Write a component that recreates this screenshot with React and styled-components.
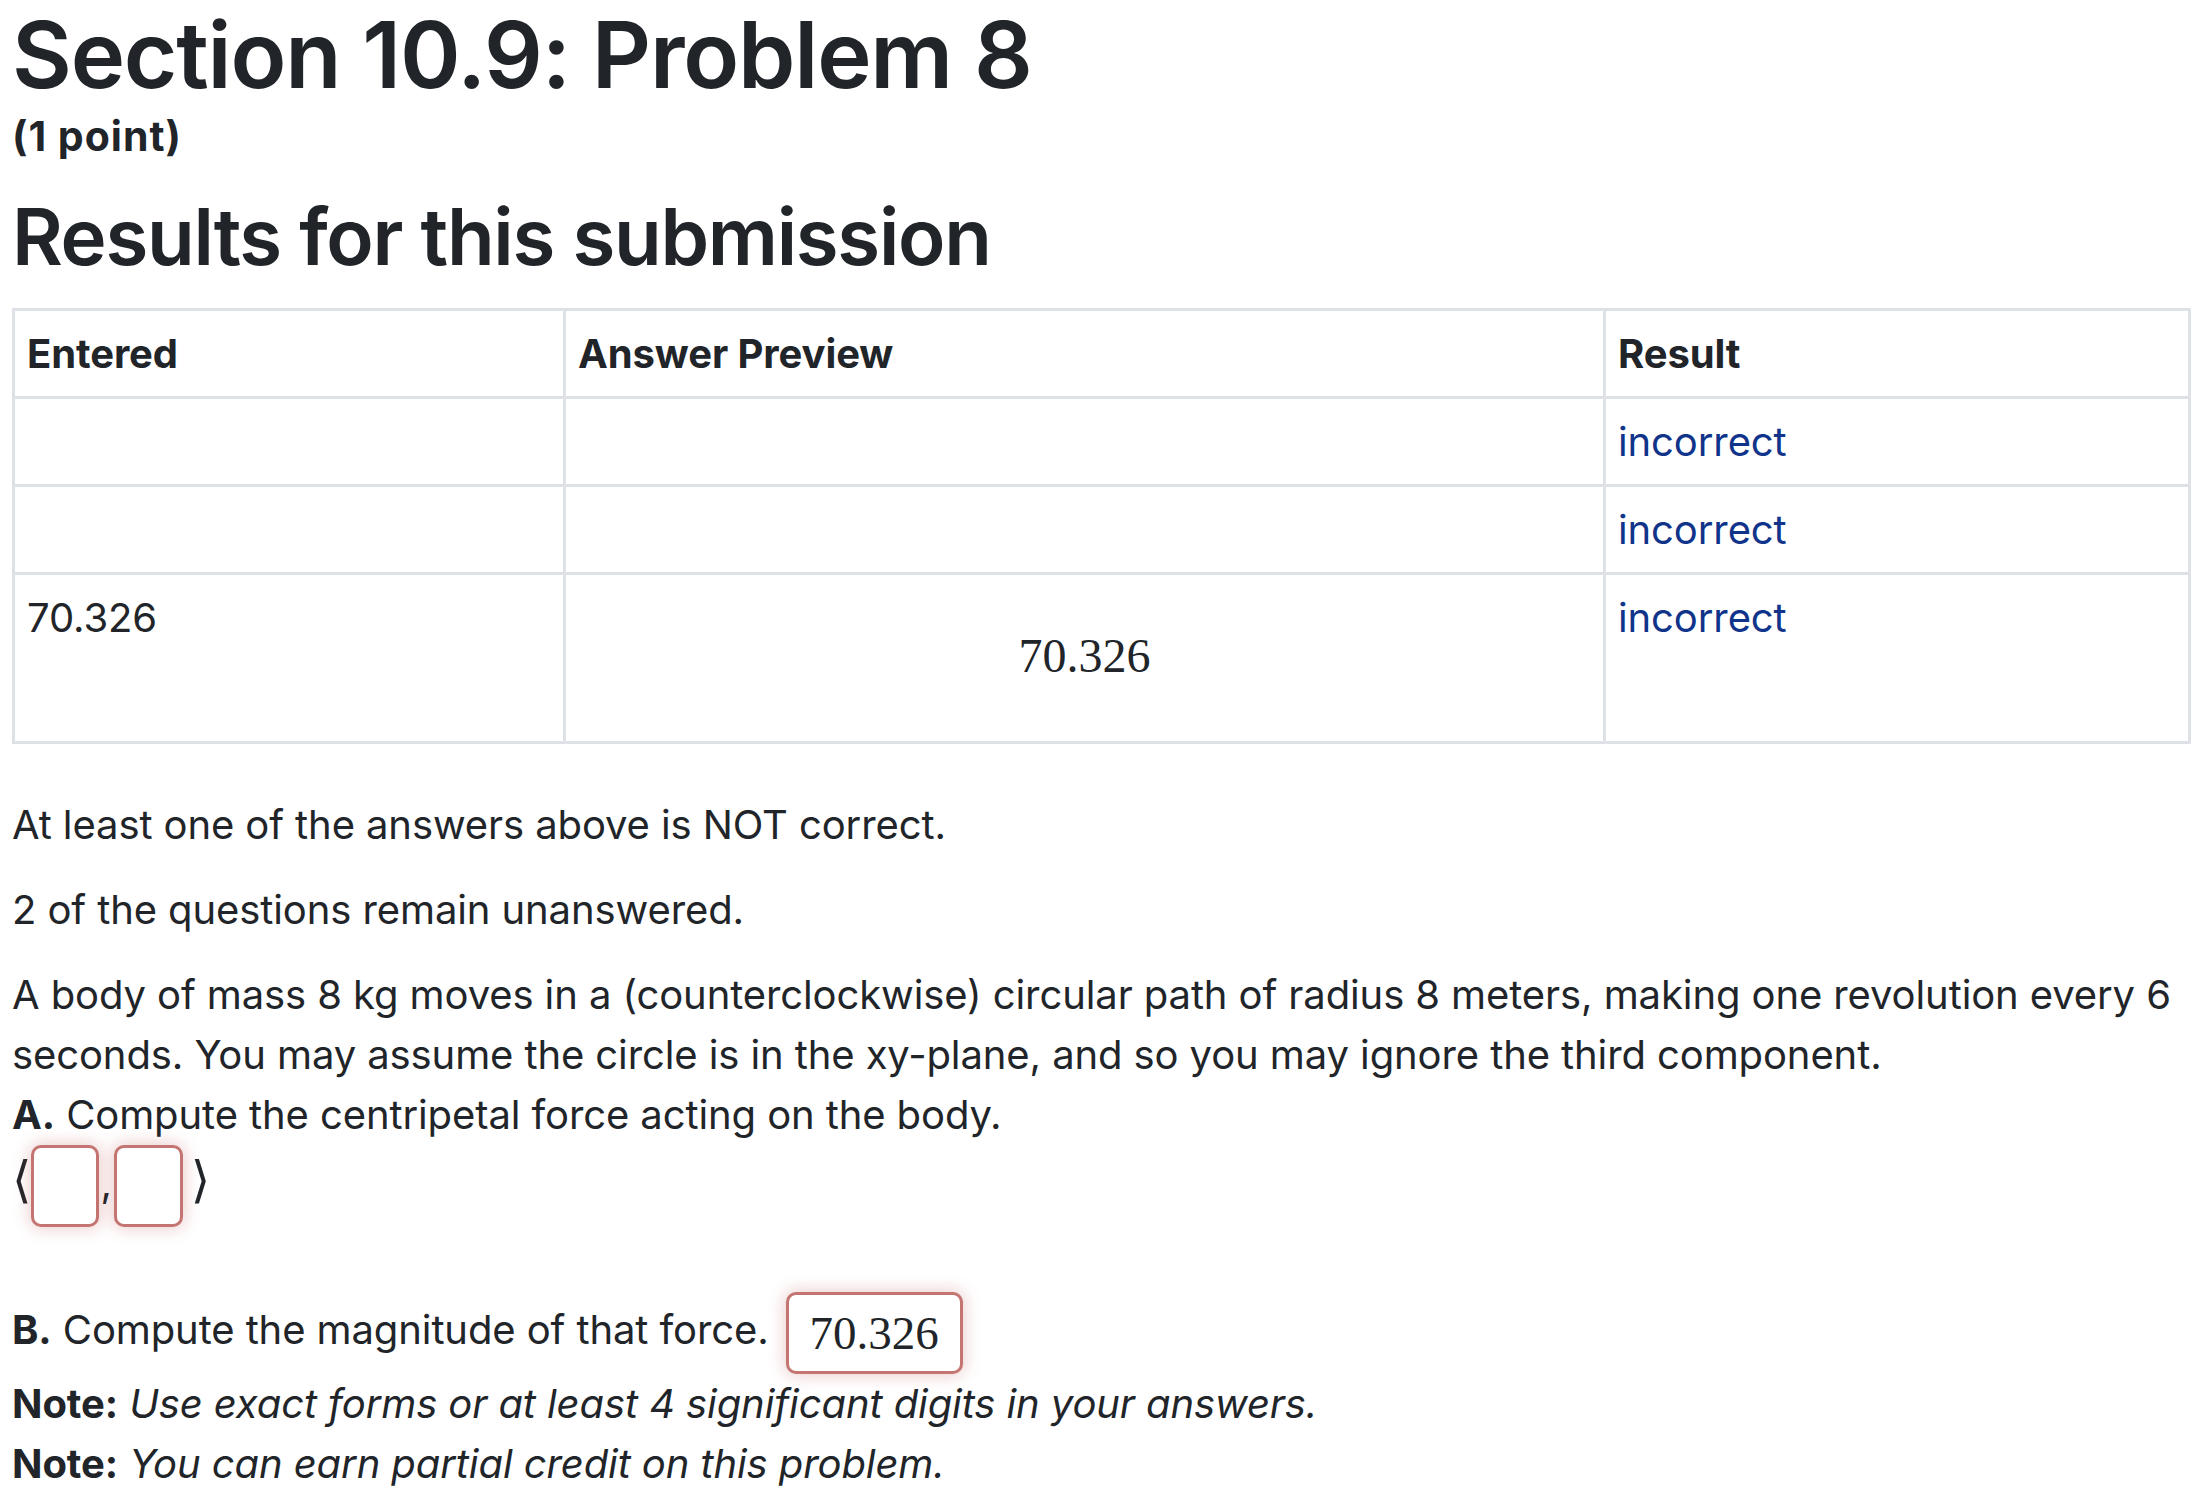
import React from "react";
import styled, { createGlobalStyle } from "styled-components";

const GlobalStyle = createGlobalStyle`
  html, body {
    margin: 0;
    padding: 0;
    background: #fff;
  }
  body {
    font-family: Inter, "Noto Sans", "Liberation Sans", sans-serif;
    font-size: 40px;
    line-height: 60px;
    color: #212529;
    letter-spacing: -0.1px;
  }
`;

const Page = styled.main`
  padding: 0 21px 40px 12px;
`;

const Title = styled.h1`
  margin: 0;
  font-size: 92px;
  font-weight: 600;
  line-height: 110px;
  letter-spacing: -1.2px;
`;

const Points = styled.div`
  font-size: 41px;
  font-weight: 700;
  line-height: 52px;
  letter-spacing: 1px;
`;

const Subtitle = styled.h2`
  margin: 28px 0 24px;
  font-size: 78px;
  font-weight: 600;
  line-height: 94px;
  letter-spacing: -1.3px;
`;

const ResultsTable = styled.table`
  width: 2179px;
  table-layout: fixed;
  border-collapse: separate;
  border-spacing: 0;
  border-top: 3px solid #dee2e6;
  border-left: 3px solid #dee2e6;
  margin-bottom: 51px;
`;

const Col = styled.col`
  width: ${(p) => p.$w}px;
`;

const HeadCell = styled.th`
  box-sizing: border-box;
  padding: 12.5px 12px;
  border-right: 3px solid #dee2e6;
  border-bottom: 3px solid #dee2e6;
  text-align: left;
  vertical-align: top;
  font-weight: 700;
`;

const Cell = styled.td`
  box-sizing: border-box;
  padding: 12.5px 12px;
  border-right: 3px solid #dee2e6;
  border-bottom: 3px solid #dee2e6;
  vertical-align: top;
  height: 85px;
`;

const Verdict = styled.span`
  color: #10348a;
`;

const MathDisplay = styled.div`
  margin: 37px 0 43px;
  text-align: center;
  font-family: "Liberation Serif", "Times New Roman", serif;
  font-size: 48px;
  line-height: 61px;
  letter-spacing: 0;
`;

const Message = styled.p`
  margin: 0 0 25px;
`;

const Problem = styled.div`
  margin-top: 25px;
`;

const Para = styled.div``;

const VectorLine = styled.div`
  margin-bottom: 65px;
`;

const Bracket = styled.span`
  font-family: "DejaVu Serif", "Liberation Serif", serif;
  font-size: 50px;
  font-weight: 300;
`;

const Comma = styled.span`
  margin: 0 2px 0 1px;
`;

const AnswerBox = styled.span`
  display: inline-block;
  box-sizing: border-box;
  vertical-align: middle;
  width: ${(p) => p.$w}px;
  height: 82px;
  margin-left: ${(p) => p.$ml || 0}px;
  margin-right: ${(p) => p.$mr || 0}px;
  border: 3px solid #c47471;
  border-radius: 10px;
  background: #fff;
  box-shadow: 0 0 16px 2px rgba(191, 84, 84, 0.28);
  text-align: center;
  font-family: "Liberation Serif", "Times New Roman", serif;
  font-size: 47px;
  line-height: 76px;
  letter-spacing: 0;
`;

const Note = styled.div`
  em {
    font-style: italic;
  }
`;

const rows = [
  { entered: "", preview: "", result: "incorrect" },
  { entered: "", preview: "", result: "incorrect" },
  { entered: "70.326", preview: "70.326", result: "incorrect" },
];

export default function App() {
  return (
    <>
      <GlobalStyle />
      <Page>
        <Title>Section 10.9: Problem 8</Title>
        <Points>(1 point)</Points>
        <Subtitle>Results for this submission</Subtitle>

        <ResultsTable>
          <colgroup>
            <Col $w={551} />
            <Col $w={1040} />
            <Col $w={585} />
          </colgroup>
          <thead>
            <tr>
              <HeadCell>Entered</HeadCell>
              <HeadCell>Answer Preview</HeadCell>
              <HeadCell>Result</HeadCell>
            </tr>
          </thead>
          <tbody>
            {rows.map((r, i) => (
              <tr key={i}>
                <Cell>{r.entered}</Cell>
                <Cell>{r.preview && <MathDisplay>{r.preview}</MathDisplay>}</Cell>
                <Cell>
                  <Verdict>{r.result}</Verdict>
                </Cell>
              </tr>
            ))}
          </tbody>
        </ResultsTable>

        <Message>At least one of the answers above is NOT correct.</Message>
        <Message>2 of the questions remain unanswered.</Message>

        <Problem>
          <Para>
            A body of mass 8 kg moves in a (counterclockwise) circular path of radius 8 meters, making one
            revolution every 6 seconds. You may assume the circle is in the xy-plane, and so you may ignore
            the third component.
            <br />
            <b>A.</b> Compute the centripetal force acting on the body.
          </Para>
          <VectorLine>
            <Bracket>⟨</Bracket>
            <AnswerBox $w={68} />
            <Comma>,</Comma>
            <AnswerBox $w={69} $mr={8} />
            <Bracket>⟩</Bracket>
          </VectorLine>
          <Para>
            <b>B.</b> Compute the magnitude of that force.{" "}
            <AnswerBox $w={177} $ml={6}>
              70.326
            </AnswerBox>
          </Para>
          <Note>
            <b>Note:</b> <em>Use exact forms or at least 4 significant digits in your answers.</em>
          </Note>
          <Note>
            <b>Note:</b> <em>You can earn partial credit on this problem.</em>
          </Note>
        </Problem>
      </Page>
    </>
  );
}
